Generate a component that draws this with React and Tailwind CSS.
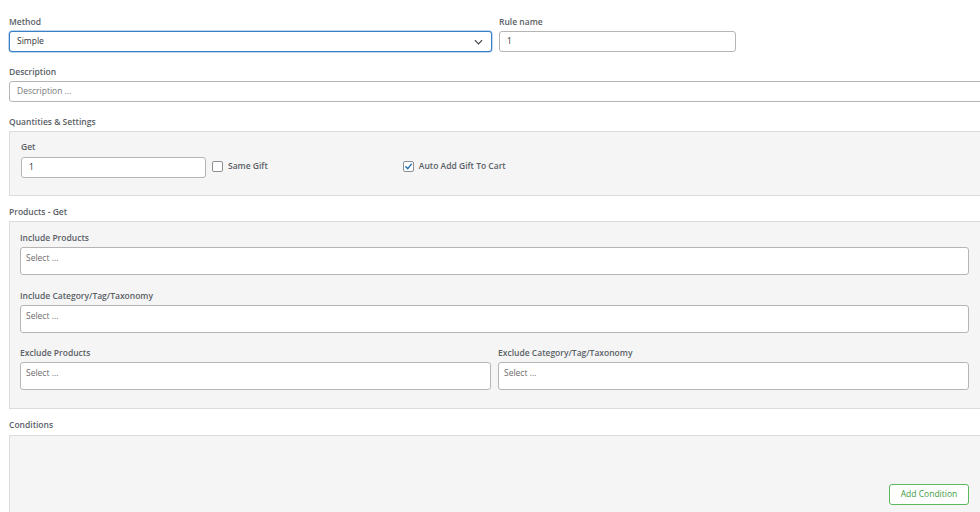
import React from "react";

const Label = ({ children, className = "" }) => (
  <div className={`h-[12px] text-[8.5px] leading-[12px] font-semibold text-[#5a6066] ${className}`}>
    {children}
  </div>
);

const TextInput = ({ value, placeholder, className = "" }) => (
  <div
    className={`h-[21px] rounded-[3px] border border-[#b5b5b5] bg-white px-[7px] flex items-center text-[8.5px] ${className}`}
  >
    {value ? (
      <span className="text-[#2c3338]">{value}</span>
    ) : (
      <span className="text-[#7a7a7a]">{placeholder}</span>
    )}
  </div>
);

const SelectBox = ({ className = "" }) => (
  <div
    className={`h-[28px] rounded-[3px] border border-[#b5b5b5] bg-white px-[5px] pt-[4px] text-[8.5px] leading-[12px] text-[#6b6b6b] ${className}`}
  >
    Select ...
  </div>
);

const Checkbox = ({ checked }) => (
  <span className="w-[11px] h-[11px] rounded-[2px] border border-[#8c8f94] bg-white flex items-center justify-center">
    {checked && (
      <svg width="9" height="9" viewBox="0 0 10 10" fill="none">
        <path d="M2 5.2 L4.2 7.4 L8.2 2.4" stroke="#2271b1" strokeWidth="1.6" strokeLinecap="round" strokeLinejoin="round" />
      </svg>
    )}
  </span>
);

const App = () => {
  return (
    <div
      className="w-[980px] h-[512px] overflow-hidden bg-white"
      style={{ fontFamily: '"Open Sans", "Noto Sans", sans-serif' }}
    >
      <div className="w-[1000px] pl-[9px] pt-[16px]">
        <div className="flex gap-[7px]">
          <div className="w-[483px]">
            <Label>Method</Label>
            <div className="mt-[3px] h-[21px] rounded-[3px] border border-[#3a7fc4] bg-white px-[7px] flex items-center justify-between text-[8.5px] text-[#2c3338] shadow-[0_0_0_0.5px_#7fb0e0]">
              <span>Simple</span>
              <svg width="9" height="6" viewBox="0 0 10 6" fill="none" className="mr-[1px]">
                <path d="M1 1 L5 5 L9 1" stroke="#3c434a" strokeWidth="1.3" />
              </svg>
            </div>
          </div>
          <div className="w-[237px]">
            <Label>Rule name</Label>
            <TextInput value="1" className="mt-[3px]" />
          </div>
        </div>

        <Label className="mt-[14px]">Description</Label>
        <TextInput placeholder="Description ..." className="mt-[3px] w-[980px] h-[20px]" />

        <Label className="mt-[14px]">Quantities & Settings</Label>
        <div className="mt-[3px] w-[972px] h-[65px] border border-[#dcdcde] bg-[#f5f5f5] pl-[11px] pt-[9px]">
          <Label>Get</Label>
          <div className="mt-[4px] flex items-start">
            <TextInput value="1" className="w-[185px]" />
            <div className="ml-[6px] mt-[3px] flex items-center gap-[5px] text-[8.5px] font-semibold text-[#5a6066]">
              <Checkbox />
              <span>Same Gift</span>
            </div>
            <div className="ml-[135px] mt-[3px] flex items-center gap-[5px] text-[8.5px] font-semibold text-[#5a6066]">
              <Checkbox checked />
              <span>Auto Add Gift To Cart</span>
            </div>
          </div>
        </div>

        <Label className="mt-[10px]">Products - Get</Label>
        <div className="mt-[3px] w-[972px] border border-[#dcdcde] bg-[#f5f5f5] pl-[10px] pr-[11px] pt-[10px] pb-[18px]">
          <Label>Include Products</Label>
          <SelectBox className="mt-[3px]" />
          <Label className="mt-[15px]">Include Category/Tag/Taxonomy</Label>
          <SelectBox className="mt-[3px]" />
          <div className="mt-[14px] flex gap-[7px]">
            <div className="flex-1">
              <Label>Exclude Products</Label>
              <SelectBox className="mt-[3px]" />
            </div>
            <div className="flex-1">
              <Label>Exclude Category/Tag/Taxonomy</Label>
              <SelectBox className="mt-[3px]" />
            </div>
          </div>
        </div>

        <Label className="mt-[10px]">Conditions</Label>
        <div className="mt-[4px] w-[972px] h-[90px] border border-[#dcdcde] bg-[#f5f5f5] pr-[11px] pt-[48px] flex justify-end items-start">
          <button className="w-[80px] h-[21px] rounded-[3px] border border-[#5cb85c] bg-white text-[8.5px] text-[#3f9a3f]">
            Add Condition
          </button>
        </div>
      </div>
    </div>
  );
};

export default App;
